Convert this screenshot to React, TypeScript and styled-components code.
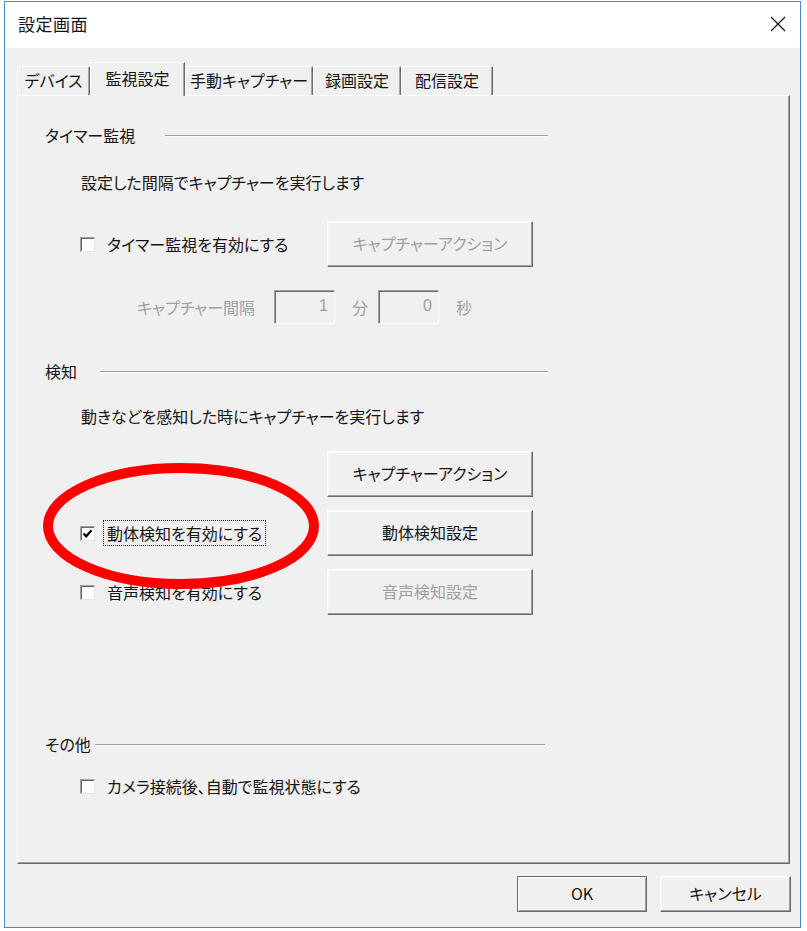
import React from "react";
import styled, { createGlobalStyle } from "styled-components";

const Global = createGlobalStyle`
  html, body { margin: 0; padding: 0; background: #ffffff; }
  body {
    font-family: "Noto Sans CJK JP", "Noto Sans", sans-serif;
    font-feature-settings: "palt";
    color: #141414;
  }
  * { box-sizing: border-box; }
`;

const Window = styled.div`
  margin: 1px 0 0 4px;
  width: 797px;
  height: 927px;
  border: 1px solid #4a89c5;
  background: #f0f0f0;
  display: flex;
  flex-direction: column;
`;

const TitleBar = styled.div`
  height: 46px;
  background: #ffffff;
  display: flex;
  align-items: center;
  justify-content: space-between;
  padding: 0 14px 2px 13px;
`;

const Title = styled.span`
  font-size: 17px;
  line-height: 20px;
  letter-spacing: 0.5px;
`;

const CloseIcon = styled.svg`
  width: 16px;
  height: 16px;
  display: block;
`;

const Body = styled.div`
  flex: 1;
  display: flex;
  flex-direction: column;
  padding: 14px 10px 0 12px;
`;

const TabStrip = styled.div`
  display: flex;
  align-items: flex-end;
  height: 33px;
  position: relative;
  z-index: 1;
`;

const Tab = styled.div<{ $w: number; $active?: boolean }>`
  width: ${(p) => p.$w}px;
  height: ${(p) => (p.$active ? 34 : 29)}px;
  margin-bottom: ${(p) => (p.$active ? -1 : 0)}px;
  display: flex;
  align-items: center;
  justify-content: center;
  padding-bottom: ${(p) => (p.$active ? 4 : 2)}px;
  font-size: 16px;
  line-height: 20px;
  white-space: nowrap;
  background: #f0f0f0;
  border-top: 1px solid #ffffff;
  border-left: 1px solid #ffffff;
  border-right: 1px solid #6a6a6a;
  box-shadow: inset -1px 0 0 #a8a8a8;
`;

const Panel = styled.div`
  position: relative;
  height: 769px;
  background: #f0f0f0;
  border-top: 1px solid #ffffff;
  border-left: 1px solid #ffffff;
  border-right: 1px solid #696969;
  border-bottom: 1px solid #696969;
  box-shadow: inset -1px -1px 0 #a0a0a0;
  padding: 29px 0 0 27px;
  display: flex;
  flex-direction: column;
`;

const HeadingRow = styled.div<{ $top: number; $lineEnd: number }>`
  margin-top: ${(p) => p.$top}px;
  width: ${(p) => p.$lineEnd}px;
  height: 20px;
  display: flex;
  align-items: center;
`;

const HeadingText = styled.span<{ $w: number; $gap?: number }>`
  flex: none;
  min-width: ${(p) => p.$w}px;
  padding-right: ${(p) => p.$gap ?? 8}px;
  white-space: nowrap;
  font-size: 16px;
  line-height: 20px;
`;

const HeadingLine = styled.div`
  flex: 1;
  height: 2px;
  border-top: 1px solid #a0a0a0;
  border-bottom: 1px solid #ffffff;
  margin-top: 2px;
`;

const Description = styled.div<{ $top: number }>`
  margin: ${(p) => p.$top}px 0 0 36px;
  font-size: 16px;
  line-height: 20px;
  white-space: nowrap;
`;

const OptionRow = styled.div<{ $top: number }>`
  margin: ${(p) => p.$top}px 0 0 35px;
  display: grid;
  grid-template-columns: 247px 206px;
  grid-auto-rows: 46px;
  row-gap: 13px;
  align-items: center;
`;

const CheckLabel = styled.label`
  display: flex;
  align-items: center;
  gap: 8px;
  font-size: 16px;
  line-height: 20px;
  white-space: nowrap;
  color: #141414;
`;

const Box = styled.span`
  flex: none;
  width: 15px;
  height: 15px;
  background: #ffffff;
  border-top: 1px solid #a0a0a0;
  border-left: 1px solid #a0a0a0;
  border-right: 1px solid #e3e3e3;
  border-bottom: 1px solid #e3e3e3;
  box-shadow: inset 1px 1px 0 #696969;
  display: flex;
  align-items: center;
  justify-content: center;
`;

const LabelText = styled.span<{ $focus?: boolean }>`
  padding: 2px 3px;
  border: 1px dotted ${(p) => (p.$focus ? "#222222" : "transparent")};
`;

const Button = styled.button<{ $h?: number; $w?: number; $default?: boolean }>`
  width: ${(p) => p.$w ?? 206}px;
  height: ${(p) => p.$h ?? 46}px;
  font-family: "Noto Sans CJK JP", "Noto Sans", sans-serif;
  font-feature-settings: "palt";
  font-size: 16px;
  line-height: 20px;
  white-space: nowrap;
  color: #141414;
  background: #f0f0f0;
  padding: 0 0 2px 0;
  border: 1px solid;
  border-color: ${(p) =>
    p.$default ? "#6a6a6a" : "#ffffff #696969 #696969 #ffffff"};
  box-shadow: ${(p) =>
    p.$default
      ? "inset 1px 1px 0 #ffffff, inset -1px -1px 0 #a0a0a0"
      : "inset -1px -1px 0 #a0a0a0, inset 1px 1px 0 #f8f8f8"};
  &:disabled {
    color: #a0a0a0;
  }
`;

const IntervalRow = styled.div<{ $top: number }>`
  margin: ${(p) => p.$top}px 0 0 92px;
  display: flex;
  align-items: center;
  height: 34px;
  font-size: 16px;
  line-height: 20px;
  color: #a0a0a0;
  white-space: nowrap;
`;

const IntervalLabel = styled.span`
  width: 137px;
`;

const Unit = styled.span<{ $l: number; $r: number }>`
  margin: 0 ${(p) => p.$r}px 0 ${(p) => p.$l}px;
`;

const NumberBox = styled.div`
  width: 61px;
  height: 34px;
  border-top: 1px solid #a0a0a0;
  border-left: 1px solid #a0a0a0;
  border-right: 1px solid #ffffff;
  border-bottom: 1px solid #ffffff;
  box-shadow: inset 1px 1px 0 #696969;
  background: #f0f0f0;
  display: flex;
  align-items: flex-start;
  justify-content: flex-end;
  padding: 5px 6px 0 0;
  font-family: "Liberation Sans", "Noto Sans", sans-serif;
  font-size: 16px;
  color: #a0a0a0;
`;

const Footer = styled.div`
  display: flex;
  justify-content: flex-end;
  gap: 13px;
  padding-top: 12px;
  margin-right: -1px;
`;

const Ellipse = styled.svg`
  position: absolute;
  left: 24px;
  top: 366px;
  width: 278px;
  height: 128px;
  pointer-events: none;
  overflow: visible;
`;

const Check = () => (
  <svg width="11" height="11" viewBox="0 0 11 11">
    <path d="M1.5 5.5 L4.2 8.3 L9.6 2.3" stroke="#000" strokeWidth="2.2" fill="none" />
  </svg>
);

const CheckBox: React.FC<{
  label: string;
  checked?: boolean;
  focus?: boolean;
}> = ({ label, checked, focus }) => (
  <CheckLabel>
    <Box>{checked && <Check />}</Box>
    <LabelText $focus={focus}>{label}</LabelText>
  </CheckLabel>
);

const tabs = [
  { label: "デバイス", w: 73 },
  { label: "監視設定", w: 95, active: true },
  { label: "手動キャプチャー", w: 128 },
  { label: "録画設定", w: 88 },
  { label: "配信設定", w: 92 },
];

export default function App() {
  return (
    <>
      <Global />
      <Window>
        <TitleBar>
          <Title>設定画面</Title>
          <CloseIcon viewBox="0 0 16 16">
            <path d="M1 1 L15 15 M15 1 L1 15" stroke="#111" strokeWidth="1.3" fill="none" />
          </CloseIcon>
        </TitleBar>
        <Body>
          <TabStrip>
            {tabs.map((t) => (
              <Tab key={t.label} $w={t.w} $active={t.active}>
                {t.label}
              </Tab>
            ))}
          </TabStrip>
          <Panel>
            <HeadingRow $top={0} $lineEnd={503}>
              <HeadingText $w={120}>タイマー監視</HeadingText>
              <HeadingLine />
            </HeadingRow>
            <Description $top={27}>設定した間隔でキャプチャーを実行します</Description>
            <OptionRow $top={29}>
              <CheckBox label="タイマー監視を有効にする" />
              <Button disabled>キャプチャーアクション</Button>
            </OptionRow>
            <IntervalRow $top={23}>
              <IntervalLabel>キャプチャー間隔</IntervalLabel>
              <NumberBox>1</NumberBox>
              <Unit $l={17} $r={10}>分</Unit>
              <NumberBox>0</NumberBox>
              <Unit $l={17} $r={0}>秒</Unit>
            </IntervalRow>

            <HeadingRow $top={37} $lineEnd={503}>
              <HeadingText $w={55}>検知</HeadingText>
              <HeadingLine />
            </HeadingRow>
            <Description $top={25}>動きなどを感知した時にキャプチャーを実行します</Description>
            <OptionRow $top={25}>
              <span />
              <Button>キャプチャーアクション</Button>
              <CheckBox label="動体検知を有効にする" checked focus />
              <Button>動体検知設定</Button>
              <CheckBox label="音声検知を有効にする" />
              <Button disabled>音声検知設定</Button>
            </OptionRow>

            <HeadingRow $top={119} $lineEnd={500}>
              <HeadingText $w={32} $gap={4}>その他</HeadingText>
              <HeadingLine />
            </HeadingRow>
            <OptionRow $top={9}>
              <CheckBox label="カメラ接続後、自動で監視状態にする" />
            </OptionRow>

            <Ellipse viewBox="0 0 278 128">
              <ellipse cx="139" cy="64" rx="133" ry="58" stroke="#ff0000" strokeWidth="10" fill="none" />
            </Ellipse>
          </Panel>
          <Footer>
            <Button $w={130} $h={36} $default>OK</Button>
            <Button $w={131} $h={36}>キャンセル</Button>
          </Footer>
        </Body>
      </Window>
    </>
  );
}
